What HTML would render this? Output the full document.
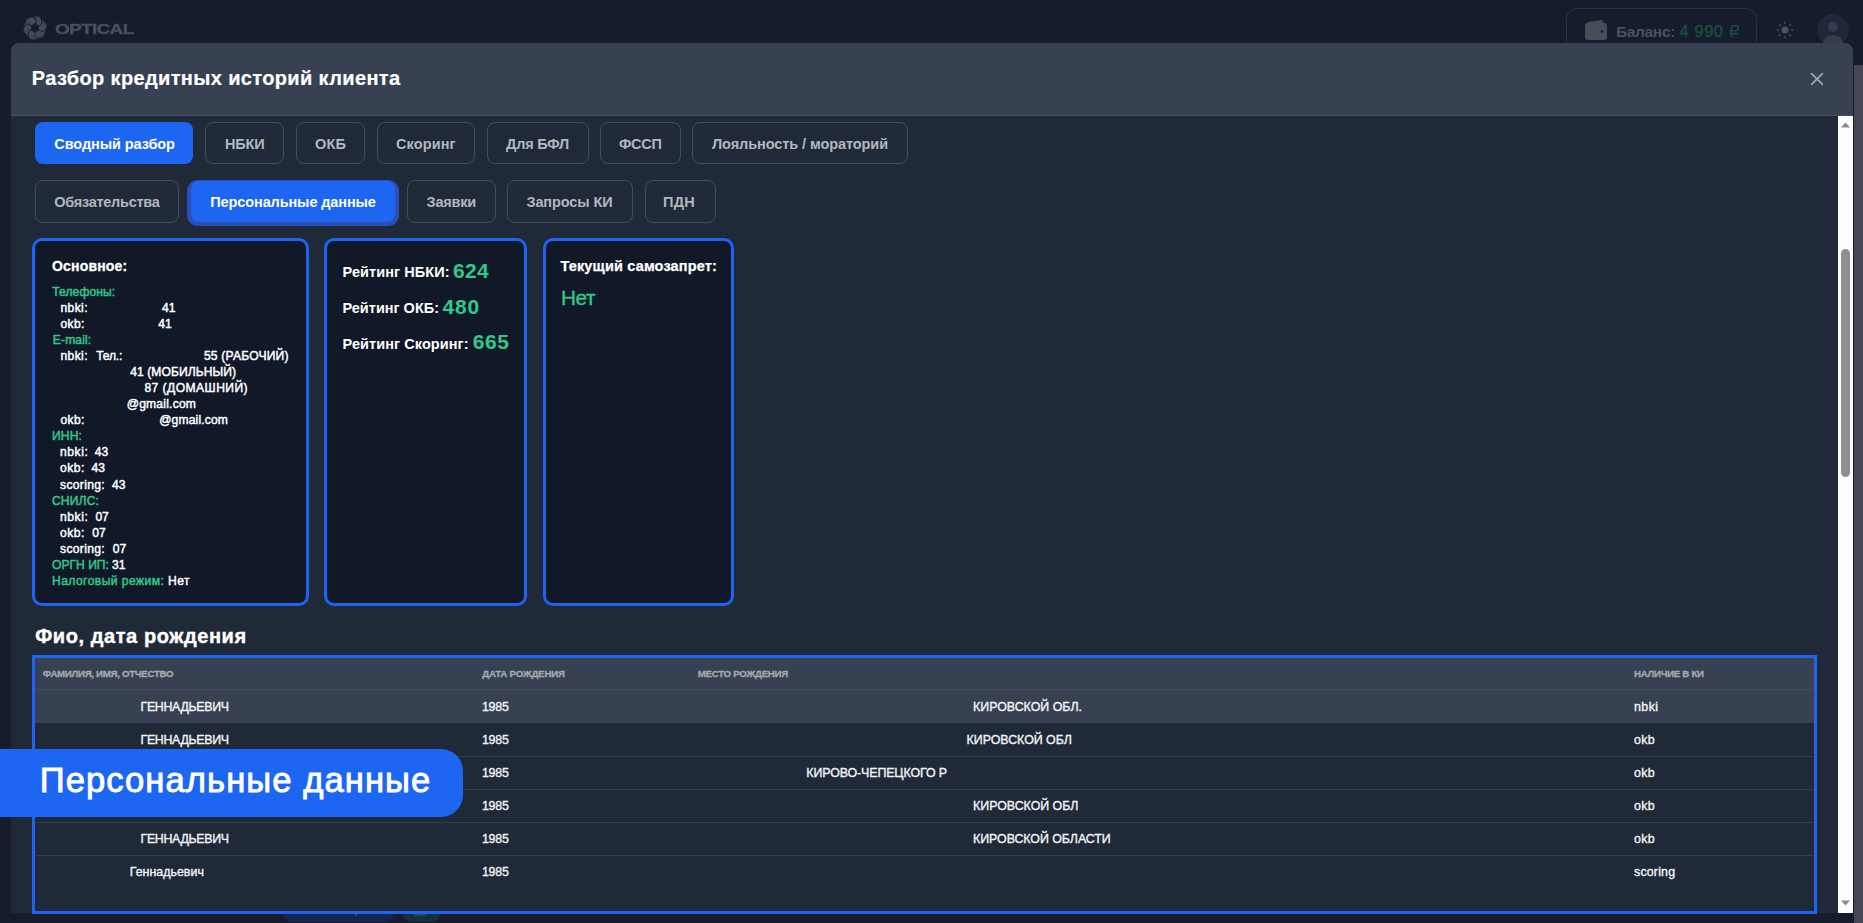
<!DOCTYPE html>
<html><head><meta charset="utf-8">
<style>
*{margin:0;padding:0;box-sizing:border-box;}
html,body{width:1863px;height:923px;overflow:hidden;background:#161c2b;font-family:"Liberation Sans",sans-serif;}
.a{position:absolute;}
.t{position:absolute;line-height:1;white-space:pre;}
.modal{position:absolute;left:11px;top:43px;width:1842px;height:870px;background:#1f2937;border-radius:8px 8px 0 0;overflow:hidden;}
.mhead{position:absolute;left:0;top:0;width:1842px;height:73px;background:#374151;border-bottom:1px solid #464f5f;}
.btn{position:absolute;border:1px solid #454c5a;border-radius:8px;background:transparent;}
.btnb{position:absolute;border-radius:8px;background:#1c66f2;}
.card{position:absolute;top:238px;height:368px;border:3px solid #1d64f4;border-radius:10px;background:#111827;}
.row{position:absolute;left:35px;width:1779px;}
.sep{position:absolute;left:35px;width:1779px;height:1px;background:#343d4c;}
</style></head>
<body>
<!-- top header (behind modal) -->
<svg class="a" style="left:19px;top:12px" width="32" height="32" viewBox="0 0 32 32">
  <defs>
    <filter id="bl" x="-30%" y="-30%" width="160%" height="160%"><feGaussianBlur stdDeviation="0.5"/></filter>
    <linearGradient id="pg" gradientUnits="userSpaceOnUse" x1="-6" y1="-10.5" x2="5" y2="-5"><stop offset="0" stop-color="#454a58" stop-opacity="0.1"/><stop offset="0.55" stop-color="#454a58" stop-opacity="0.85"/><stop offset="1" stop-color="#474c5a"/></linearGradient>
  </defs>
  <g transform="translate(16,16)" filter="url(#bl)">
    <path id="pt" d="M4.7,-1.7 C8.5,-3 9.5,-8 6,-10.5 C2.5,-12.8 -2,-12.3 -6,-10 C-2,-10.2 0.8,-7.5 0.2,-3.6 C1.8,-3.2 3.5,-2.5 4.7,-1.7 Z" fill="url(#pg)" stroke="#161c2b" stroke-width="0.9"/>
    <use href="#pt" transform="rotate(60)"/><use href="#pt" transform="rotate(120)"/>
    <use href="#pt" transform="rotate(180)"/><use href="#pt" transform="rotate(240)"/><use href="#pt" transform="rotate(300)"/>
  </g>
</svg>
<div class="a" style="left:1566px;top:8px;width:191px;height:60px;border:1.5px solid #2a3141;border-radius:11px;"></div>
<svg class="a" style="left:1584px;top:19px" width="24" height="22" viewBox="0 0 24 22">
  <path d="M4 3 L17 1 Q19 1 19 3 L19 4 L4 4 Z" fill="#474c59"/>
  <rect x="1" y="4" width="22" height="17" rx="3" fill="#474c59"/>
  <circle cx="18" cy="12.5" r="1.3" fill="#161c2b"/>
</svg>
<svg class="a" style="left:1776px;top:21px" width="18" height="18" viewBox="0 0 18 18">
  <circle cx="9" cy="9" r="3.6" fill="#4a505e"/>
  <g stroke="#4a505e" stroke-width="1.5" stroke-linecap="round">
    <line x1="9" y1="1.3" x2="9" y2="2.3"/><line x1="9" y1="15.7" x2="9" y2="16.7"/>
    <line x1="1.3" y1="9" x2="2.3" y2="9"/><line x1="15.7" y1="9" x2="16.7" y2="9"/>
    <line x1="3.6" y1="3.6" x2="4.2" y2="4.2"/><line x1="13.8" y1="13.8" x2="14.4" y2="14.4"/>
    <line x1="3.6" y1="14.4" x2="4.2" y2="13.8"/><line x1="13.8" y1="4.2" x2="14.4" y2="3.6"/>
  </g>
</svg>
<svg class="a" style="left:1816px;top:13px" width="34" height="34" viewBox="0 0 34 34">
  <circle cx="17" cy="17" r="16" fill="#20273a"/>
  <circle cx="17" cy="14" r="5" fill="#363c4c"/>
  <ellipse cx="17" cy="30" rx="10" ry="8" fill="#363c4c"/>
</svg>
<svg class="a" style="left:1727.5px;top:25px" width="12" height="12" viewBox="0 0 12 12">
  <path d="M3.5 11.9 V0.8 H7.2 Q10.4 0.8 10.4 3.3 Q10.4 5.8 7.2 5.8 H1.3 M1.3 8.6 H10.4" fill="none" stroke="#1b4b3e" stroke-width="1.6"/>
</svg>
<!-- page scrollbar -->
<div class="a" style="left:1854px;top:65px;width:9px;height:858px;background:#454852;"></div>

<!-- bottom peek shapes -->
<div class="a" style="left:283px;top:880px;width:111px;height:42px;background:#15264f;border-radius:10px;"></div>
<div class="a" style="left:355px;top:914px;width:2px;height:2px;background:#3a4560;"></div>
<div class="a" style="left:402px;top:880px;width:39px;height:42px;background:#13303f;border-radius:10px;"></div>
<div class="a" style="left:414px;top:914px;width:13px;height:2px;background:#34424f;border-radius:1px;"></div>
<!-- modal -->
<div class="modal">
  <div class="mhead"></div>
  <svg class="a" style="left:1799px;top:29px" width="14" height="14" viewBox="0 0 14 14">
    <path d="M1.6 1.6 L12.4 12.4 M12.4 1.6 L1.6 12.4" stroke="#a3a9b4" stroke-width="1.6" stroke-linecap="round"/>
  </svg>
  <!-- inner scrollbar -->
  <div class="a" style="left:1827px;top:73px;width:15px;height:797px;background:#fdfdfd;"></div>
  <svg class="a" style="left:1829px;top:78px" width="11" height="8" viewBox="0 0 11 8"><path d="M1 6.5 L5.5 1.5 L10 6.5 Z" fill="#8a8a8a"/></svg>
  <svg class="a" style="left:1829px;top:856px" width="11" height="8" viewBox="0 0 11 8"><path d="M1 1.5 L5.5 6.5 L10 1.5 Z" fill="#8a8a8a"/></svg>
  <div class="a" style="left:1830px;top:206px;width:9px;height:228px;background:#8f8f8f;border-radius:4.5px;"></div>
</div>

<!-- tabs -->
<div class="btnb" style="left:35px;top:122px;width:158px;height:42px;"></div>
<div class="btn" style="left:205px;top:122px;width:79px;height:42px;"></div>
<div class="btn" style="left:296px;top:122px;width:69px;height:42px;"></div>
<div class="btn" style="left:377px;top:122px;width:98px;height:42px;"></div>
<div class="btn" style="left:487px;top:122px;width:102px;height:42px;"></div>
<div class="btn" style="left:600px;top:122px;width:81px;height:42px;"></div>
<div class="btn" style="left:692px;top:122px;width:216px;height:42px;"></div>

<div class="btn" style="left:35px;top:180px;width:144px;height:43px;"></div>
<div class="a" style="left:187px;top:180px;width:212px;height:46px;background:#2a50b8;border-radius:11px;"></div>
<div class="btnb" style="left:191px;top:181px;width:204px;height:41px;"></div>
<div class="btn" style="left:407px;top:180px;width:89px;height:43px;"></div>
<div class="btn" style="left:507px;top:180px;width:126px;height:43px;"></div>
<div class="btn" style="left:645px;top:180px;width:71px;height:43px;"></div>

<!-- cards -->
<div class="card" style="left:32px;width:277px;"></div>
<div class="card" style="left:324px;width:203px;"></div>
<div class="card" style="left:543px;width:191px;"></div>

<!-- table -->
<div class="a" style="left:32px;top:655px;width:1785px;height:259px;border:3px solid #1d64f4;background:#1f2937;"></div>
<div class="row" style="top:658px;height:31px;background:#374151;"></div>
<div class="sep" style="top:689px;background:#434c5c;"></div>
<div class="row" style="top:690px;height:33px;background:#374151;"></div>
<div class="sep" style="top:756px;"></div>
<div class="sep" style="top:789px;"></div>
<div class="sep" style="top:822px;"></div>
<div class="sep" style="top:855px;"></div>

<span class="t" id="t0" style="left:55.00px;top:22.43px;font-size:14.5px;font-weight:700;color:#484e5c;letter-spacing:-0.585px;transform:scaleX(1.32);transform-origin:0 0;-webkit-text-stroke:0.35px #484e5c;">OPTICAL</span>
<span class="t" id="t1" style="left:1616.00px;top:23.58px;font-size:15.5px;font-weight:700;color:#4b505d;letter-spacing:-0.339px;">Баланс:</span>
<span class="t" id="t2" style="left:1679.50px;top:22.72px;font-size:16.4px;font-weight:400;color:#1b4b3e;letter-spacing:0.614px;-webkit-text-stroke:0.5px #1b4b3e;">4 990</span>
<span class="t" id="t3" style="left:31.80px;top:67.67px;font-size:20px;font-weight:700;color:#ffffff;letter-spacing:0.362px;-webkit-text-stroke:0.2px #fff;">Разбор кредитных историй клиента</span>
<span class="t" id="t4" style="left:54.30px;top:137.33px;font-size:14.5px;font-weight:700;color:#ffffff;letter-spacing:-0.090px;">Сводный разбор</span>
<span class="t" id="t5" style="left:224.90px;top:137.33px;font-size:14.5px;font-weight:700;color:#b3b7bf;letter-spacing:-0.093px;">НБКИ</span>
<span class="t" id="t6" style="left:315.00px;top:137.33px;font-size:14.5px;font-weight:700;color:#b3b7bf;letter-spacing:0.146px;">ОКБ</span>
<span class="t" id="t7" style="left:396.00px;top:137.33px;font-size:14.5px;font-weight:700;color:#b3b7bf;letter-spacing:0.104px;">Скоринг</span>
<span class="t" id="t8" style="left:506.00px;top:137.33px;font-size:14.5px;font-weight:700;color:#b3b7bf;letter-spacing:-0.195px;">Для БФЛ</span>
<span class="t" id="t9" style="left:619.00px;top:137.33px;font-size:14.5px;font-weight:700;color:#b3b7bf;letter-spacing:-0.312px;">ФССП</span>
<span class="t" id="t10" style="left:712.00px;top:137.33px;font-size:14.5px;font-weight:700;color:#b3b7bf;letter-spacing:-0.081px;">Лояльность / мораторий</span>
<span class="t" id="t11" style="left:54.30px;top:195.03px;font-size:14.5px;font-weight:700;color:#b3b7bf;letter-spacing:-0.279px;">Обязательства</span>
<span class="t" id="t12" style="left:210.30px;top:195.03px;font-size:14.5px;font-weight:700;color:#ffffff;letter-spacing:-0.115px;">Персональные данные</span>
<span class="t" id="t13" style="left:426.50px;top:195.03px;font-size:14.5px;font-weight:700;color:#b3b7bf;letter-spacing:-0.201px;">Заявки</span>
<span class="t" id="t14" style="left:526.40px;top:195.03px;font-size:14.5px;font-weight:700;color:#b3b7bf;letter-spacing:-0.089px;">Запросы КИ</span>
<span class="t" id="t15" style="left:663.00px;top:195.03px;font-size:14.5px;font-weight:700;color:#b3b7bf;letter-spacing:0.255px;">ПДН</span>
<span class="t" id="t16" style="left:52.00px;top:258.75px;font-size:14px;font-weight:700;color:#ffffff;letter-spacing:0.183px;-webkit-text-stroke:0.3px #fff;">Основное:</span>
<span class="t" id="t17" style="left:52.30px;top:286.16px;font-size:12.1px;font-weight:400;color:#31c98b;letter-spacing:0.074px;-webkit-text-stroke:0.45px #31c98b;">Телефоны:</span>
<span class="t" id="t18" style="left:60.40px;top:302.19px;font-size:12.1px;font-weight:400;color:#ffffff;letter-spacing:0.411px;-webkit-text-stroke:0.45px #fff;">nbki:</span>
<span class="t" id="t19" style="left:162.00px;top:302.19px;font-size:12.1px;font-weight:400;color:#ffffff;letter-spacing:0.000px;-webkit-text-stroke:0.45px #fff;">41</span>
<span class="t" id="t20" style="left:60.40px;top:318.22px;font-size:12.1px;font-weight:400;color:#ffffff;letter-spacing:0.385px;-webkit-text-stroke:0.45px #fff;">okb:</span>
<span class="t" id="t21" style="left:158.30px;top:318.22px;font-size:12.1px;font-weight:400;color:#ffffff;letter-spacing:0.000px;-webkit-text-stroke:0.45px #fff;">41</span>
<span class="t" id="t22" style="left:52.80px;top:334.25px;font-size:12.1px;font-weight:400;color:#31c98b;letter-spacing:0.123px;-webkit-text-stroke:0.45px #31c98b;">E-mail:</span>
<span class="t" id="t23" style="left:60.40px;top:350.28px;font-size:12.1px;font-weight:400;color:#ffffff;letter-spacing:0.411px;-webkit-text-stroke:0.45px #fff;">nbki:</span>
<span class="t" id="t24" style="left:96.20px;top:350.28px;font-size:12.1px;font-weight:400;color:#ffffff;letter-spacing:-0.163px;-webkit-text-stroke:0.45px #fff;">Тел.:</span>
<span class="t" id="t25" style="left:203.90px;top:350.28px;font-size:12.1px;font-weight:400;color:#ffffff;letter-spacing:0.185px;-webkit-text-stroke:0.45px #fff;">55 (РАБОЧИЙ)</span>
<span class="t" id="t26" style="left:130.30px;top:366.31px;font-size:12.1px;font-weight:400;color:#ffffff;letter-spacing:0.051px;-webkit-text-stroke:0.45px #fff;">41 (МОБИЛЬНЫЙ)</span>
<span class="t" id="t27" style="left:144.40px;top:382.34px;font-size:12.1px;font-weight:400;color:#ffffff;letter-spacing:0.453px;-webkit-text-stroke:0.45px #fff;">87 (ДОМАШНИЙ)</span>
<span class="t" id="t28" style="left:126.70px;top:398.37px;font-size:12.1px;font-weight:400;color:#ffffff;letter-spacing:0.201px;-webkit-text-stroke:0.45px #fff;">@gmail.com</span>
<span class="t" id="t29" style="left:60.40px;top:414.40px;font-size:12.1px;font-weight:400;color:#ffffff;letter-spacing:0.385px;-webkit-text-stroke:0.45px #fff;">okb:</span>
<span class="t" id="t30" style="left:159.20px;top:414.40px;font-size:12.1px;font-weight:400;color:#ffffff;letter-spacing:0.151px;-webkit-text-stroke:0.45px #fff;">@gmail.com</span>
<span class="t" id="t31" style="left:52.00px;top:430.43px;font-size:12.1px;font-weight:400;color:#31c98b;letter-spacing:0.117px;-webkit-text-stroke:0.45px #31c98b;">ИНН:</span>
<span class="t" id="t32" style="left:60.10px;top:446.46px;font-size:12.1px;font-weight:400;color:#ffffff;letter-spacing:0.531px;-webkit-text-stroke:0.45px #fff;">nbki:</span>
<span class="t" id="t33" style="left:94.80px;top:446.46px;font-size:12.1px;font-weight:400;color:#ffffff;letter-spacing:0.000px;-webkit-text-stroke:0.45px #fff;">43</span>
<span class="t" id="t34" style="left:60.10px;top:462.49px;font-size:12.1px;font-weight:400;color:#ffffff;letter-spacing:0.460px;-webkit-text-stroke:0.45px #fff;">okb:</span>
<span class="t" id="t35" style="left:91.50px;top:462.49px;font-size:12.1px;font-weight:400;color:#ffffff;letter-spacing:0.000px;-webkit-text-stroke:0.45px #fff;">43</span>
<span class="t" id="t36" style="left:60.10px;top:478.52px;font-size:12.1px;font-weight:400;color:#ffffff;letter-spacing:0.318px;-webkit-text-stroke:0.45px #fff;">scoring:</span>
<span class="t" id="t37" style="left:112.10px;top:478.52px;font-size:12.1px;font-weight:400;color:#ffffff;letter-spacing:0.000px;-webkit-text-stroke:0.45px #fff;">43</span>
<span class="t" id="t38" style="left:52.00px;top:494.55px;font-size:12.1px;font-weight:400;color:#31c98b;letter-spacing:0.133px;-webkit-text-stroke:0.45px #31c98b;">СНИЛС:</span>
<span class="t" id="t39" style="left:60.10px;top:510.58px;font-size:12.1px;font-weight:400;color:#ffffff;letter-spacing:0.531px;-webkit-text-stroke:0.45px #fff;">nbki:</span>
<span class="t" id="t40" style="left:95.40px;top:510.58px;font-size:12.1px;font-weight:400;color:#ffffff;letter-spacing:0.000px;-webkit-text-stroke:0.45px #fff;">07</span>
<span class="t" id="t41" style="left:60.10px;top:526.61px;font-size:12.1px;font-weight:400;color:#ffffff;letter-spacing:0.460px;-webkit-text-stroke:0.45px #fff;">okb:</span>
<span class="t" id="t42" style="left:92.20px;top:526.61px;font-size:12.1px;font-weight:400;color:#ffffff;letter-spacing:0.000px;-webkit-text-stroke:0.45px #fff;">07</span>
<span class="t" id="t43" style="left:60.10px;top:542.64px;font-size:12.1px;font-weight:400;color:#ffffff;letter-spacing:0.318px;-webkit-text-stroke:0.45px #fff;">scoring:</span>
<span class="t" id="t44" style="left:112.80px;top:542.64px;font-size:12.1px;font-weight:400;color:#ffffff;letter-spacing:0.000px;-webkit-text-stroke:0.45px #fff;">07</span>
<span class="t" id="t45" style="left:52.00px;top:558.67px;font-size:12.1px;font-weight:400;color:#31c98b;letter-spacing:0.003px;-webkit-text-stroke:0.45px #31c98b;">ОРГН ИП:</span>
<span class="t" id="t46" style="left:112.10px;top:558.67px;font-size:12.1px;font-weight:400;color:#ffffff;letter-spacing:0.000px;-webkit-text-stroke:0.45px #fff;">31</span>
<span class="t" id="t47" style="left:52.00px;top:574.70px;font-size:12.1px;font-weight:400;color:#31c98b;letter-spacing:0.429px;-webkit-text-stroke:0.45px #31c98b;">Налоговый режим:</span>
<span class="t" id="t48" style="left:168.00px;top:574.70px;font-size:12.1px;font-weight:400;color:#ffffff;letter-spacing:0.530px;-webkit-text-stroke:0.45px #fff;">Нет</span>
<span class="t" id="t49" style="left:342.50px;top:265.13px;font-size:14.5px;font-weight:700;color:#ffffff;letter-spacing:0.075px;">Рейтинг НБКИ:</span>
<span class="t" id="t50" style="left:453.00px;top:259.62px;font-size:21px;font-weight:700;color:#31c98b;letter-spacing:0.318px;">624</span>
<span class="t" id="t51" style="left:342.50px;top:301.13px;font-size:14.5px;font-weight:700;color:#ffffff;letter-spacing:-0.001px;">Рейтинг ОКБ:</span>
<span class="t" id="t52" style="left:442.50px;top:295.62px;font-size:21px;font-weight:700;color:#31c98b;letter-spacing:0.784px;">480</span>
<span class="t" id="t53" style="left:342.50px;top:336.93px;font-size:14.5px;font-weight:700;color:#ffffff;letter-spacing:0.074px;">Рейтинг Скоринг:</span>
<span class="t" id="t54" style="left:472.80px;top:331.42px;font-size:21px;font-weight:700;color:#31c98b;letter-spacing:0.518px;">665</span>
<span class="t" id="t55" style="left:560.40px;top:258.63px;font-size:14.5px;font-weight:700;color:#ffffff;letter-spacing:0.157px;-webkit-text-stroke:0.25px #fff;">Текущий самозапрет:</span>
<span class="t" id="t56" style="left:561.00px;top:287.89px;font-size:20.8px;font-weight:400;color:#31c98b;letter-spacing:-0.474px;-webkit-text-stroke:0.35px #31c98b;">Нет</span>
<span class="t" id="t57" style="left:35.20px;top:625.87px;font-size:20px;font-weight:700;color:#ffffff;letter-spacing:0.572px;-webkit-text-stroke:0.4px #fff;">Фио, дата рождения</span>
<span class="t" id="t58" style="left:42.70px;top:668.79px;font-size:9.7px;font-weight:700;color:#a3a8b1;letter-spacing:-0.306px;-webkit-text-stroke:0.3px #a3a8b1;">ФАМИЛИЯ, ИМЯ, ОТЧЕСТВО</span>
<span class="t" id="t59" style="left:482.20px;top:668.79px;font-size:9.7px;font-weight:700;color:#a3a8b1;letter-spacing:-0.208px;-webkit-text-stroke:0.3px #a3a8b1;">ДАТА РОЖДЕНИЯ</span>
<span class="t" id="t60" style="left:697.70px;top:668.79px;font-size:9.7px;font-weight:700;color:#a3a8b1;letter-spacing:-0.263px;-webkit-text-stroke:0.3px #a3a8b1;">МЕСТО РОЖДЕНИЯ</span>
<span class="t" id="t61" style="left:1634.00px;top:668.79px;font-size:9.7px;font-weight:700;color:#a3a8b1;letter-spacing:-0.305px;-webkit-text-stroke:0.3px #a3a8b1;">НАЛИЧИЕ В КИ</span>
<span class="t" id="t62" style="left:140.50px;top:701.40px;font-size:12.4px;font-weight:400;color:#f3f4f6;letter-spacing:-0.315px;-webkit-text-stroke:0.35px #f3f4f6;">ГЕННАДЬЕВИЧ</span>
<span class="t" id="t63" style="left:481.90px;top:701.40px;font-size:12.4px;font-weight:400;color:#f3f4f6;letter-spacing:-0.170px;-webkit-text-stroke:0.35px #f3f4f6;">1985</span>
<span class="t" id="t64" style="left:973.10px;top:701.40px;font-size:12.4px;font-weight:400;color:#f3f4f6;letter-spacing:-0.005px;-webkit-text-stroke:0.35px #f3f4f6;">КИРОВСКОЙ ОБЛ.</span>
<span class="t" id="t65" style="left:1634.00px;top:701.40px;font-size:12.4px;font-weight:400;color:#f3f4f6;letter-spacing:0.441px;-webkit-text-stroke:0.35px #f3f4f6;">nbki</span>
<span class="t" id="t66" style="left:140.50px;top:734.40px;font-size:12.4px;font-weight:400;color:#f3f4f6;letter-spacing:-0.315px;-webkit-text-stroke:0.35px #f3f4f6;">ГЕННАДЬЕВИЧ</span>
<span class="t" id="t67" style="left:481.90px;top:734.40px;font-size:12.4px;font-weight:400;color:#f3f4f6;letter-spacing:-0.170px;-webkit-text-stroke:0.35px #f3f4f6;">1985</span>
<span class="t" id="t68" style="left:966.60px;top:734.40px;font-size:12.4px;font-weight:400;color:#f3f4f6;letter-spacing:-0.010px;-webkit-text-stroke:0.35px #f3f4f6;">КИРОВСКОЙ ОБЛ</span>
<span class="t" id="t69" style="left:1634.00px;top:734.40px;font-size:12.4px;font-weight:400;color:#f3f4f6;letter-spacing:0.339px;-webkit-text-stroke:0.35px #f3f4f6;">okb</span>
<span class="t" id="t70" style="left:481.90px;top:767.40px;font-size:12.4px;font-weight:400;color:#f3f4f6;letter-spacing:-0.170px;-webkit-text-stroke:0.35px #f3f4f6;">1985</span>
<span class="t" id="t71" style="left:806.30px;top:767.40px;font-size:12.4px;font-weight:400;color:#f3f4f6;letter-spacing:-0.090px;-webkit-text-stroke:0.35px #f3f4f6;">КИРОВО-ЧЕПЕЦКОГО Р</span>
<span class="t" id="t72" style="left:1634.00px;top:767.40px;font-size:12.4px;font-weight:400;color:#f3f4f6;letter-spacing:0.339px;-webkit-text-stroke:0.35px #f3f4f6;">okb</span>
<span class="t" id="t73" style="left:481.90px;top:800.40px;font-size:12.4px;font-weight:400;color:#f3f4f6;letter-spacing:-0.170px;-webkit-text-stroke:0.35px #f3f4f6;">1985</span>
<span class="t" id="t74" style="left:973.10px;top:800.40px;font-size:12.4px;font-weight:400;color:#f3f4f6;letter-spacing:-0.010px;-webkit-text-stroke:0.35px #f3f4f6;">КИРОВСКОЙ ОБЛ</span>
<span class="t" id="t75" style="left:1634.00px;top:800.40px;font-size:12.4px;font-weight:400;color:#f3f4f6;letter-spacing:0.339px;-webkit-text-stroke:0.35px #f3f4f6;">okb</span>
<span class="t" id="t76" style="left:140.50px;top:833.40px;font-size:12.4px;font-weight:400;color:#f3f4f6;letter-spacing:-0.315px;-webkit-text-stroke:0.35px #f3f4f6;">ГЕННАДЬЕВИЧ</span>
<span class="t" id="t77" style="left:481.90px;top:833.40px;font-size:12.4px;font-weight:400;color:#f3f4f6;letter-spacing:-0.170px;-webkit-text-stroke:0.35px #f3f4f6;">1985</span>
<span class="t" id="t78" style="left:973.10px;top:833.40px;font-size:12.4px;font-weight:400;color:#f3f4f6;letter-spacing:-0.055px;-webkit-text-stroke:0.35px #f3f4f6;">КИРОВСКОЙ ОБЛАСТИ</span>
<span class="t" id="t79" style="left:1634.00px;top:833.40px;font-size:12.4px;font-weight:400;color:#f3f4f6;letter-spacing:0.339px;-webkit-text-stroke:0.35px #f3f4f6;">okb</span>
<span class="t" id="t80" style="left:129.80px;top:866.40px;font-size:12.4px;font-weight:400;color:#f3f4f6;letter-spacing:0.019px;-webkit-text-stroke:0.35px #f3f4f6;">Геннадьевич</span>
<span class="t" id="t81" style="left:481.90px;top:866.40px;font-size:12.4px;font-weight:400;color:#f3f4f6;letter-spacing:-0.170px;-webkit-text-stroke:0.35px #f3f4f6;">1985</span>
<span class="t" id="t82" style="left:1634.00px;top:866.40px;font-size:12.4px;font-weight:400;color:#f3f4f6;letter-spacing:0.192px;-webkit-text-stroke:0.35px #f3f4f6;">scoring</span>

<!-- banner -->
<div class="a" style="left:0;top:749px;width:463px;height:68px;background:#1c66f2;border-radius:0 22px 22px 0;"></div>
<span class="t" id="tB" style="left:39.80px;top:763.31px;font-size:34.6px;font-weight:400;color:#ffffff;letter-spacing:1.067px;-webkit-text-stroke:0.9px #fff;">Персональные данные</span>
</body></html>
